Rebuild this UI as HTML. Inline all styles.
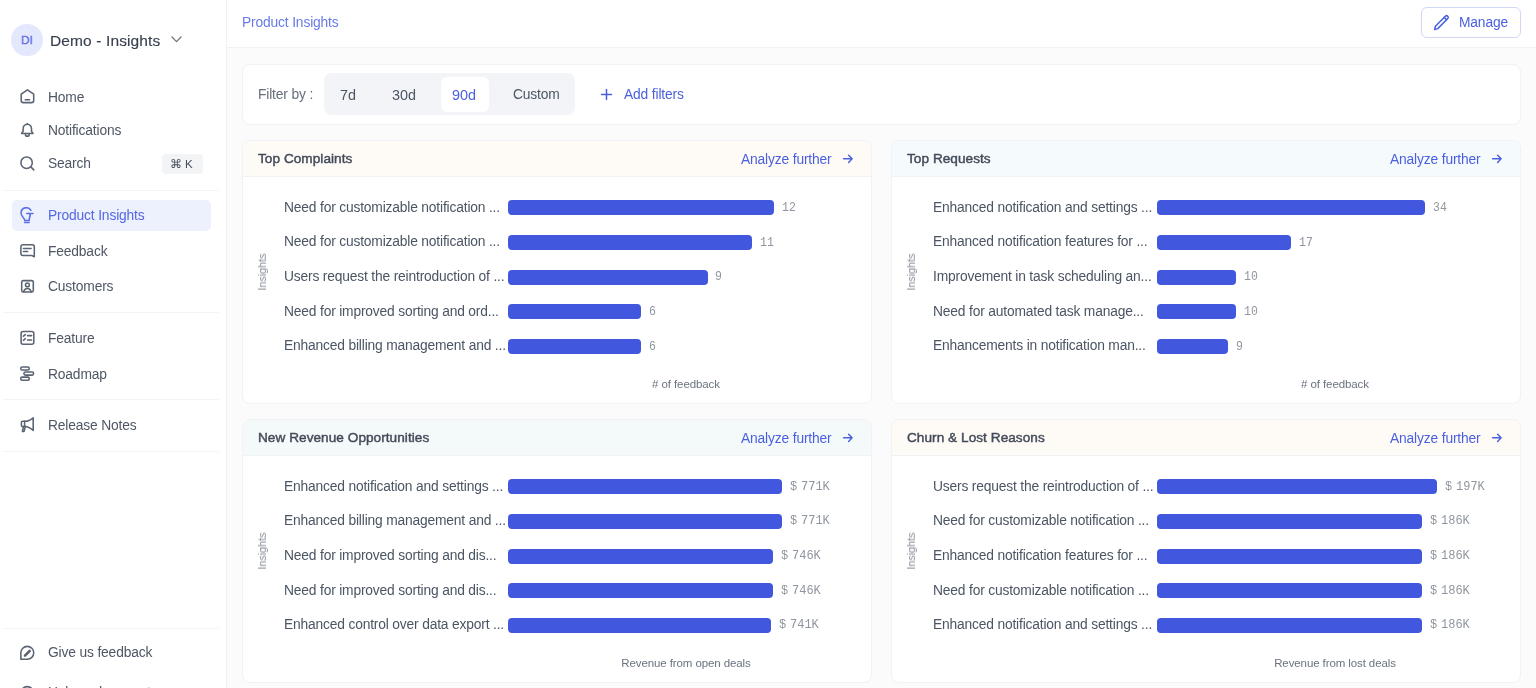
<!DOCTYPE html>
<html><head><meta charset="utf-8"><title>Product Insights</title>
<style>
html,body{margin:0;padding:0;}
body{width:1536px;height:688px;overflow:hidden;position:relative;background:#fbfbfc;font-family:"Liberation Sans",sans-serif;}
.t{position:absolute;white-space:nowrap;will-change:transform;}
.ic{position:absolute;overflow:visible;}
#sb{position:absolute;left:0;top:0;width:226px;height:688px;background:#fff;border-right:1px solid #f0f1f4;}
.avatar{position:absolute;left:11.2px;top:24px;width:31.5px;height:31.5px;border-radius:50%;background:#e4e8fc;}
.avatar span{position:absolute;left:0;right:0;top:8.8px;text-align:center;font-size:11.8px;line-height:14px;color:#5f74e6;font-weight:400;-webkit-text-stroke:0.35px #5f74e6;}
.kbd{position:absolute;left:162px;top:154px;width:41px;height:20px;border-radius:4px;background:#f3f4f6;font-size:11.5px;line-height:20px;text-align:center;color:#454d5a;box-sizing:border-box;padding-right:2.4px;will-change:transform;}
.div{position:absolute;left:3px;width:216px;height:1px;background:#f3f4f6;}
.active{position:absolute;left:12px;top:199.5px;width:198.5px;height:31.5px;border-radius:5px;background:#edf0fd;}
#hdr{position:absolute;left:227px;top:0;width:1309px;height:47px;background:#fff;border-bottom:1px solid #f1f2f4;}
.manage{position:absolute;left:1421px;top:7px;width:98px;height:29px;border:1px solid #d2d7f7;border-radius:6px;background:#fff;}
.card{position:absolute;background:#fff;border:1px solid #f1f2f5;border-radius:8px;box-sizing:border-box;}
.chd{position:absolute;left:0;top:0;right:0;height:36px;box-sizing:border-box;border-bottom:1px solid #f1f2f4;}
.seg{position:absolute;left:324px;top:73px;width:251px;height:42px;border-radius:8px;background:#f3f4f7;}
.pill{position:absolute;left:440.5px;top:77px;width:48.5px;height:35px;border-radius:6px;background:#fff;}
.bar{position:absolute;height:15.2px;background:#4057de;border-radius:4px;}
.ylab{position:absolute;font-size:10.8px;line-height:12px;color:#858b95;transform:translate(-50%,-50%) rotate(-90deg);white-space:nowrap;will-change:transform;}
</style></head><body>
<div id="sb">
<div class="avatar"><span>DI</span></div>
<div class="t " style="left:50.40px;top:30.83px;font-size:15.5px;line-height:20px;color:#363f4e;font-weight:400;-webkit-text-stroke:0.15px #363f4e;letter-spacing:0.12px;">Demo - Insights</div>
<svg class="ic" style="left:171px;top:36px;width:11px;height:7px" viewBox="0 0 11 7" fill="none" stroke="#6b7280" stroke-width="1.3" stroke-linecap="round" stroke-linejoin="round"><path d="M1 1l4.5 4.6L10 1"/></svg>
<svg class="ic" style="left:16px;top:86px;width:24px;height:24px" viewBox="0 0 24 24" fill="none" stroke="#5b6472" stroke-width="1.55" stroke-linecap="round" stroke-linejoin="round"><path d="M5.2 8.2 11.45 3.9 17.7 8.2V14.4a2.2 2.2 0 0 1-2.2 2.2H7.4a2.2 2.2 0 0 1-2.2-2.2z"/><path d="M9.2 13.8h4.4" stroke-width="1.4"/></svg>
<div class="t " style="left:48.40px;top:88.52px;font-size:13.8px;line-height:18px;color:#4f5765;font-weight:400;letter-spacing:-0.15px;">Home</div>
<svg class="ic" style="left:16px;top:120px;width:24px;height:24px" viewBox="0 0 24 24" fill="none" stroke="#5b6472" stroke-width="1.55" stroke-linecap="round" stroke-linejoin="round"><path d="M5.6 13.4H17L15.5 11.2V8.6A4.2 4.2 0 0 0 11.3 4.2 4.2 4.2 0 0 0 7.1 8.6V11.2z"/><path d="M9.5 13.6v1.6a.9.9 0 0 0 .9.9h1.8a.9.9 0 0 0 .9-.9v-1.6"/><path d="M11.3 3.4v.8"/></svg>
<div class="t " style="left:48.40px;top:121.72px;font-size:13.8px;line-height:18px;color:#4f5765;font-weight:400;letter-spacing:-0.15px;">Notifications</div>
<svg class="ic" style="left:16px;top:152px;width:24px;height:24px" viewBox="0 0 24 24" fill="none" stroke="#5b6472" stroke-width="1.55" stroke-linecap="round" stroke-linejoin="round"><circle cx="10.6" cy="10.7" r="5.7"/><path d="m14.8 14.9 3 3"/></svg>
<div class="t " style="left:48.40px;top:155.32px;font-size:13.8px;line-height:18px;color:#4f5765;font-weight:400;letter-spacing:-0.15px;">Search</div>
<div class="kbd">&#8984; K</div>
<div class="div" style="top:189.5px"></div>
<div class="active"></div>
<svg class="ic" style="left:16px;top:204px;width:24px;height:24px" viewBox="0 0 24 24" fill="none" stroke="#5b6fe6" stroke-width="1.55" stroke-linecap="round" stroke-linejoin="round"><path d="M8.8 16.4c0-2.2-3.8-3.6-3.8-7.6a5.3 5.3 0 0 1 9.9-2.4"/><path d="M13.2 16.4c0-1.6.2-2.8.9-4.2"/><path d="M8.8 16.4h4.4"/><path d="M8.6 18.6h4.6" stroke-width="1.5"/><path d="M10.8 9.5h6.2"/><path d="M14.1 10.2v1.6"/></svg>
<div class="t " style="left:48.40px;top:206.72px;font-size:13.8px;line-height:18px;color:#5468e3;font-weight:400;letter-spacing:-0.15px;">Product Insights</div>
<svg class="ic" style="left:16px;top:239px;width:24px;height:24px" viewBox="0 0 24 24" fill="none" stroke="#5b6472" stroke-width="1.55" stroke-linecap="round" stroke-linejoin="round"><path d="M6.9 5.7h9.4a2 2 0 0 1 2 2v10.1l-2.7-1.4H6.9a2 2 0 0 1-2-2V7.7a2 2 0 0 1 2-2z"/><path d="M7.5 9.4h7.6M7.5 12.4h4.2"/></svg>
<div class="t " style="left:48.40px;top:242.72px;font-size:13.8px;line-height:18px;color:#4f5765;font-weight:400;letter-spacing:-0.15px;">Feedback</div>
<svg class="ic" style="left:16px;top:274px;width:24px;height:24px" viewBox="0 0 24 24" fill="none" stroke="#5b6472" stroke-width="1.55" stroke-linecap="round" stroke-linejoin="round"><rect x="5.7" y="6.6" width="11.6" height="11.4" rx="1.6"/><circle cx="11.4" cy="10.9" r="1.9"/><path d="M7.6 18c.5-2.2 2-3.6 3.8-3.6s3.3 1.4 3.8 3.6"/></svg>
<div class="t " style="left:48.40px;top:278.42px;font-size:13.8px;line-height:18px;color:#4f5765;font-weight:400;letter-spacing:-0.15px;">Customers</div>
<div class="div" style="top:311.5px"></div>
<svg class="ic" style="left:16px;top:326px;width:24px;height:24px" viewBox="0 0 24 24" fill="none" stroke="#5b6472" stroke-width="1.55" stroke-linecap="round" stroke-linejoin="round"><rect x="5.1" y="5.4" width="12.7" height="12.9" rx="2"/><path d="m7.4 10.2 1.9-1.6M7.4 14.3l1.9-1.6M11.5 9.6h4.1M11.5 13.9h4.1"/></svg>
<div class="t " style="left:48.40px;top:330.22px;font-size:13.8px;line-height:18px;color:#4f5765;font-weight:400;letter-spacing:-0.15px;">Feature</div>
<svg class="ic" style="left:16px;top:361px;width:24px;height:24px" viewBox="0 0 24 24" fill="none" stroke="#5b6472" stroke-width="1.55" stroke-linecap="round" stroke-linejoin="round"><rect x="4.7" y="5.9" width="8.6" height="3.1" rx="1.55"/><rect x="7.9" y="11" width="9.7" height="3.1" rx="1.55"/><rect x="4.7" y="16.1" width="8.6" height="3.1" rx="1.55"/></svg>
<div class="t " style="left:48.40px;top:365.72px;font-size:13.8px;line-height:18px;color:#4f5765;font-weight:400;letter-spacing:-0.15px;">Roadmap</div>
<div class="div" style="top:399px"></div>
<svg class="ic" style="left:16px;top:413px;width:24px;height:24px" viewBox="0 0 24 24" fill="none" stroke="#5b6472" stroke-width="1.55" stroke-linecap="round" stroke-linejoin="round"><path d="M6.6 8.3h2.8c2.3 0 5.2-1.4 7.8-3.5v12.6c-2.6-2.1-5.5-3.9-7.8-3.9H6.6a1.2 1.2 0 0 1-1.2-1.2V9.5a1.2 1.2 0 0 1 1.2-1.2z"/><path d="M8.6 8.3v5.2"/><path d="m9.3 13.6-1.2 4.8H6.4l1.1-4.8"/></svg>
<div class="t " style="left:48.40px;top:416.92px;font-size:13.8px;line-height:18px;color:#4f5765;font-weight:400;letter-spacing:-0.15px;">Release Notes</div>
<div class="div" style="top:450.5px"></div>
<div class="div" style="top:628px"></div>
<svg class="ic" style="left:16px;top:640.8px;width:24px;height:24px" viewBox="0 0 24 24" fill="none" stroke="#5b6472" stroke-width="1.55" stroke-linecap="round" stroke-linejoin="round"><path d="M4.85 18.2V11.8a6.45 6.45 0 1 1 6.45 6.45z"/><path d="M9 14.6 13.6 10" stroke-width="2.6"/></svg>
<div class="t " style="left:48.40px;top:643.82px;font-size:13.8px;line-height:18px;color:#4f5765;font-weight:400;letter-spacing:-0.15px;">Give us feedback</div>
<svg class="ic" style="left:16px;top:680.5px;width:24px;height:24px" viewBox="0 0 24 24" fill="none" stroke="#5b6472" stroke-width="1.55" stroke-linecap="round" stroke-linejoin="round"><circle cx="11.3" cy="11.8" r="6.2"/></svg>
<div class="t " style="left:48.40px;top:684.42px;font-size:13.8px;line-height:18px;color:#4f5765;font-weight:400;letter-spacing:-0.15px;">Help and support</div>
</div>
<div id="hdr"></div>
<div class="t " style="left:241.80px;top:13.62px;font-size:13.8px;line-height:18px;color:#687be7;font-weight:400;letter-spacing:-0.15px;">Product Insights</div>
<div class="manage"></div>
<svg class="ic" style="left:1428px;top:10px;width:24px;height:24px" viewBox="0 0 24 24" fill="none" stroke="#4a5fe0" stroke-width="1.5" stroke-linecap="round" stroke-linejoin="round"><path d="M6.6 19.5 7.4 16.2 17.4 6.2a1.65 1.65 0 0 1 2.35 2.35L9.8 18.6z"/><path d="m16.2 7.4 2.3 2.3"/></svg>
<div class="t " style="left:1459.30px;top:14.32px;font-size:13.8px;line-height:18px;color:#4a5fe0;font-weight:400;letter-spacing:-0.15px;">Manage</div>
<div class="card" style="left:242px;top:64px;width:1279px;height:61px"></div>
<div class="t " style="left:257.80px;top:85.82px;font-size:13.8px;line-height:18px;color:#666d7a;font-weight:400;letter-spacing:-0.15px;">Filter by :</div>
<div class="seg"></div><div class="pill"></div>
<div class="t " style="left:340.00px;top:85.61px;font-size:14.4px;line-height:18px;color:#4b5563;font-weight:400;">7d</div>
<div class="t " style="left:391.80px;top:85.61px;font-size:14.4px;line-height:18px;color:#4b5563;font-weight:400;">30d</div>
<div class="t " style="left:452.20px;top:85.61px;font-size:14.4px;line-height:18px;color:#4a5fe0;font-weight:400;">90d</div>
<div class="t " style="left:512.80px;top:85.82px;font-size:13.8px;line-height:18px;color:#4b5563;font-weight:400;letter-spacing:-0.15px;">Custom</div>
<svg class="ic" style="left:594px;top:82px;width:24px;height:24px" viewBox="0 0 24 24" fill="none" stroke="#4a5fe0" stroke-width="1.5" stroke-linecap="round"><path d="M12.5 7.4v10M7.5 12.4h10"/></svg>
<div class="t " style="left:624.00px;top:85.82px;font-size:13.8px;line-height:18px;color:#4a5fe0;font-weight:400;letter-spacing:-0.15px;">Add filters</div>
<div class="card" style="left:242.0px;top:140px;width:630px;height:264px;overflow:hidden"><div class="chd" style="background:#fefbf6"></div></div>
<div class="t " style="left:257.50px;top:149.89px;font-size:13.6px;line-height:18px;color:#434b59;font-weight:400;-webkit-text-stroke:0.45px #434b59;letter-spacing:0.05px;">Top Complaints</div>
<div class="t " style="left:740.80px;top:150.62px;font-size:13.8px;line-height:18px;color:#4a5fe0;font-weight:400;letter-spacing:-0.15px;">Analyze further</div>
<svg class="ic" style="left:836.0px;top:148px;width:24px;height:24px" viewBox="0 0 24 24" fill="none" stroke="#4a5fe0" stroke-width="1.45" stroke-linecap="round" stroke-linejoin="round"><path d="M7.6 10.8H16M12.6 7.3l3.5 3.5-3.5 3.6"/></svg>
<div class="ylab" style="left:261.7px;top:272px">Insights</div>
<div class="t " style="left:284.40px;top:198.62px;font-size:13.8px;line-height:18px;color:#4b5563;font-weight:400;letter-spacing:-0.15px;letter-spacing:-0.17px;">Need for customizable notification ...</div>
<div class="bar" style="left:508.3px;top:200.30px;width:265.7px"></div>
<div class="t " style="left:781.60px;top:198.92px;font-size:11.5px;line-height:18px;color:#90969f;font-weight:400;font-family:'Liberation Mono',monospace;transform:scaleY(1.16);transform-origin:0 13.0px;">12</div>
<div class="t " style="left:284.40px;top:233.27px;font-size:13.8px;line-height:18px;color:#4b5563;font-weight:400;letter-spacing:-0.15px;letter-spacing:-0.17px;">Need for customizable notification ...</div>
<div class="bar" style="left:508.3px;top:234.95px;width:243.6px"></div>
<div class="t " style="left:759.50px;top:233.57px;font-size:11.5px;line-height:18px;color:#90969f;font-weight:400;font-family:'Liberation Mono',monospace;transform:scaleY(1.16);transform-origin:0 13.0px;">11</div>
<div class="t " style="left:284.40px;top:267.92px;font-size:13.8px;line-height:18px;color:#4b5563;font-weight:400;letter-spacing:-0.15px;letter-spacing:-0.17px;">Users request the reintroduction of ...</div>
<div class="bar" style="left:508.3px;top:269.60px;width:199.3px"></div>
<div class="t " style="left:715.20px;top:268.22px;font-size:11.5px;line-height:18px;color:#90969f;font-weight:400;font-family:'Liberation Mono',monospace;transform:scaleY(1.16);transform-origin:0 13.0px;">9</div>
<div class="t " style="left:284.40px;top:302.57px;font-size:13.8px;line-height:18px;color:#4b5563;font-weight:400;letter-spacing:-0.15px;letter-spacing:-0.17px;">Need for improved sorting and ord...</div>
<div class="bar" style="left:508.3px;top:304.25px;width:132.9px"></div>
<div class="t " style="left:648.80px;top:302.87px;font-size:11.5px;line-height:18px;color:#90969f;font-weight:400;font-family:'Liberation Mono',monospace;transform:scaleY(1.16);transform-origin:0 13.0px;">6</div>
<div class="t " style="left:284.40px;top:337.22px;font-size:13.8px;line-height:18px;color:#4b5563;font-weight:400;letter-spacing:-0.15px;letter-spacing:-0.17px;">Enhanced billing management and ...</div>
<div class="bar" style="left:508.3px;top:338.90px;width:132.9px"></div>
<div class="t " style="left:648.80px;top:337.52px;font-size:11.5px;line-height:18px;color:#90969f;font-weight:400;font-family:'Liberation Mono',monospace;transform:scaleY(1.16);transform-origin:0 13.0px;">6</div>
<div class="t " style="left:686.00px;top:374.92px;font-size:11.5px;line-height:18px;color:#6b7280;font-weight:400;transform:translateX(-50%);letter-spacing:-0.1px;"># of feedback</div>
<div class="card" style="left:891.0px;top:140px;width:630px;height:264px;overflow:hidden"><div class="chd" style="background:#f5fafc"></div></div>
<div class="t " style="left:906.50px;top:149.89px;font-size:13.6px;line-height:18px;color:#434b59;font-weight:400;-webkit-text-stroke:0.45px #434b59;letter-spacing:0.05px;">Top Requests</div>
<div class="t " style="left:1389.80px;top:150.62px;font-size:13.8px;line-height:18px;color:#4a5fe0;font-weight:400;letter-spacing:-0.15px;">Analyze further</div>
<svg class="ic" style="left:1485.0px;top:148px;width:24px;height:24px" viewBox="0 0 24 24" fill="none" stroke="#4a5fe0" stroke-width="1.45" stroke-linecap="round" stroke-linejoin="round"><path d="M7.6 10.8H16M12.6 7.3l3.5 3.5-3.5 3.6"/></svg>
<div class="ylab" style="left:910.7px;top:272px">Insights</div>
<div class="t " style="left:933.40px;top:198.62px;font-size:13.8px;line-height:18px;color:#4b5563;font-weight:400;letter-spacing:-0.15px;letter-spacing:-0.17px;">Enhanced notification and settings ...</div>
<div class="bar" style="left:1157.3px;top:200.30px;width:268px"></div>
<div class="t " style="left:1432.90px;top:198.92px;font-size:11.5px;line-height:18px;color:#90969f;font-weight:400;font-family:'Liberation Mono',monospace;transform:scaleY(1.16);transform-origin:0 13.0px;">34</div>
<div class="t " style="left:933.40px;top:233.27px;font-size:13.8px;line-height:18px;color:#4b5563;font-weight:400;letter-spacing:-0.15px;letter-spacing:-0.17px;">Enhanced notification features for ...</div>
<div class="bar" style="left:1157.3px;top:234.95px;width:134px"></div>
<div class="t " style="left:1298.90px;top:233.57px;font-size:11.5px;line-height:18px;color:#90969f;font-weight:400;font-family:'Liberation Mono',monospace;transform:scaleY(1.16);transform-origin:0 13.0px;">17</div>
<div class="t " style="left:933.40px;top:267.92px;font-size:13.8px;line-height:18px;color:#4b5563;font-weight:400;letter-spacing:-0.15px;letter-spacing:-0.17px;">Improvement in task scheduling an...</div>
<div class="bar" style="left:1157.3px;top:269.60px;width:78.8px"></div>
<div class="t " style="left:1243.70px;top:268.22px;font-size:11.5px;line-height:18px;color:#90969f;font-weight:400;font-family:'Liberation Mono',monospace;transform:scaleY(1.16);transform-origin:0 13.0px;">10</div>
<div class="t " style="left:933.40px;top:302.57px;font-size:13.8px;line-height:18px;color:#4b5563;font-weight:400;letter-spacing:-0.15px;letter-spacing:-0.17px;">Need for automated task manage...</div>
<div class="bar" style="left:1157.3px;top:304.25px;width:78.8px"></div>
<div class="t " style="left:1243.70px;top:302.87px;font-size:11.5px;line-height:18px;color:#90969f;font-weight:400;font-family:'Liberation Mono',monospace;transform:scaleY(1.16);transform-origin:0 13.0px;">10</div>
<div class="t " style="left:933.40px;top:337.22px;font-size:13.8px;line-height:18px;color:#4b5563;font-weight:400;letter-spacing:-0.15px;letter-spacing:-0.17px;">Enhancements in notification man...</div>
<div class="bar" style="left:1157.3px;top:338.90px;width:70.9px"></div>
<div class="t " style="left:1235.80px;top:337.52px;font-size:11.5px;line-height:18px;color:#90969f;font-weight:400;font-family:'Liberation Mono',monospace;transform:scaleY(1.16);transform-origin:0 13.0px;">9</div>
<div class="t " style="left:1335.00px;top:374.92px;font-size:11.5px;line-height:18px;color:#6b7280;font-weight:400;transform:translateX(-50%);letter-spacing:-0.1px;"># of feedback</div>
<div class="card" style="left:242.0px;top:419px;width:630px;height:264px;overflow:hidden"><div class="chd" style="background:#f4fafa"></div></div>
<div class="t " style="left:257.50px;top:428.89px;font-size:13.6px;line-height:18px;color:#434b59;font-weight:400;-webkit-text-stroke:0.45px #434b59;letter-spacing:0.05px;">New Revenue Opportunities</div>
<div class="t " style="left:740.80px;top:429.62px;font-size:13.8px;line-height:18px;color:#4a5fe0;font-weight:400;letter-spacing:-0.15px;">Analyze further</div>
<svg class="ic" style="left:836.0px;top:427px;width:24px;height:24px" viewBox="0 0 24 24" fill="none" stroke="#4a5fe0" stroke-width="1.45" stroke-linecap="round" stroke-linejoin="round"><path d="M7.6 10.8H16M12.6 7.3l3.5 3.5-3.5 3.6"/></svg>
<div class="ylab" style="left:261.7px;top:551px">Insights</div>
<div class="t " style="left:284.40px;top:477.62px;font-size:13.8px;line-height:18px;color:#4b5563;font-weight:400;letter-spacing:-0.15px;letter-spacing:-0.17px;">Enhanced notification and settings ...</div>
<div class="bar" style="left:508.3px;top:479.30px;width:273.7px"></div>
<div class="t " style="left:789.80px;top:477.74px;font-size:12px;line-height:18px;color:#90969f;font-weight:400;font-family:'Liberation Mono',monospace;word-spacing:-3.4px;transform:scaleY(1.14);transform-origin:0 13.2px;">$ 771K</div>
<div class="t " style="left:284.40px;top:512.27px;font-size:13.8px;line-height:18px;color:#4b5563;font-weight:400;letter-spacing:-0.15px;letter-spacing:-0.17px;">Enhanced billing management and ...</div>
<div class="bar" style="left:508.3px;top:513.95px;width:273.7px"></div>
<div class="t " style="left:789.80px;top:512.39px;font-size:12px;line-height:18px;color:#90969f;font-weight:400;font-family:'Liberation Mono',monospace;word-spacing:-3.4px;transform:scaleY(1.14);transform-origin:0 13.2px;">$ 771K</div>
<div class="t " style="left:284.40px;top:546.92px;font-size:13.8px;line-height:18px;color:#4b5563;font-weight:400;letter-spacing:-0.15px;letter-spacing:-0.17px;">Need for improved sorting and dis...</div>
<div class="bar" style="left:508.3px;top:548.60px;width:264.8px"></div>
<div class="t " style="left:780.90px;top:547.04px;font-size:12px;line-height:18px;color:#90969f;font-weight:400;font-family:'Liberation Mono',monospace;word-spacing:-3.4px;transform:scaleY(1.14);transform-origin:0 13.2px;">$ 746K</div>
<div class="t " style="left:284.40px;top:581.57px;font-size:13.8px;line-height:18px;color:#4b5563;font-weight:400;letter-spacing:-0.15px;letter-spacing:-0.17px;">Need for improved sorting and dis...</div>
<div class="bar" style="left:508.3px;top:583.25px;width:264.8px"></div>
<div class="t " style="left:780.90px;top:581.69px;font-size:12px;line-height:18px;color:#90969f;font-weight:400;font-family:'Liberation Mono',monospace;word-spacing:-3.4px;transform:scaleY(1.14);transform-origin:0 13.2px;">$ 746K</div>
<div class="t " style="left:284.40px;top:616.22px;font-size:13.8px;line-height:18px;color:#4b5563;font-weight:400;letter-spacing:-0.15px;letter-spacing:-0.17px;">Enhanced control over data export ...</div>
<div class="bar" style="left:508.3px;top:617.90px;width:263px"></div>
<div class="t " style="left:779.10px;top:616.34px;font-size:12px;line-height:18px;color:#90969f;font-weight:400;font-family:'Liberation Mono',monospace;word-spacing:-3.4px;transform:scaleY(1.14);transform-origin:0 13.2px;">$ 741K</div>
<div class="t " style="left:686.00px;top:653.92px;font-size:11.5px;line-height:18px;color:#6b7280;font-weight:400;transform:translateX(-50%);letter-spacing:-0.1px;">Revenue from open deals</div>
<div class="card" style="left:891.0px;top:419px;width:630px;height:264px;overflow:hidden"><div class="chd" style="background:#fefbf6"></div></div>
<div class="t " style="left:906.50px;top:428.89px;font-size:13.6px;line-height:18px;color:#434b59;font-weight:400;-webkit-text-stroke:0.45px #434b59;letter-spacing:0.05px;">Churn &amp; Lost Reasons</div>
<div class="t " style="left:1389.80px;top:429.62px;font-size:13.8px;line-height:18px;color:#4a5fe0;font-weight:400;letter-spacing:-0.15px;">Analyze further</div>
<svg class="ic" style="left:1485.0px;top:427px;width:24px;height:24px" viewBox="0 0 24 24" fill="none" stroke="#4a5fe0" stroke-width="1.45" stroke-linecap="round" stroke-linejoin="round"><path d="M7.6 10.8H16M12.6 7.3l3.5 3.5-3.5 3.6"/></svg>
<div class="ylab" style="left:910.7px;top:551px">Insights</div>
<div class="t " style="left:933.40px;top:477.62px;font-size:13.8px;line-height:18px;color:#4b5563;font-weight:400;letter-spacing:-0.15px;letter-spacing:-0.17px;">Users request the reintroduction of ...</div>
<div class="bar" style="left:1157.3px;top:479.30px;width:280px"></div>
<div class="t " style="left:1445.10px;top:477.74px;font-size:12px;line-height:18px;color:#90969f;font-weight:400;font-family:'Liberation Mono',monospace;word-spacing:-3.4px;transform:scaleY(1.14);transform-origin:0 13.2px;">$ 197K</div>
<div class="t " style="left:933.40px;top:512.27px;font-size:13.8px;line-height:18px;color:#4b5563;font-weight:400;letter-spacing:-0.15px;letter-spacing:-0.17px;">Need for customizable notification ...</div>
<div class="bar" style="left:1157.3px;top:513.95px;width:264.4px"></div>
<div class="t " style="left:1429.50px;top:512.39px;font-size:12px;line-height:18px;color:#90969f;font-weight:400;font-family:'Liberation Mono',monospace;word-spacing:-3.4px;transform:scaleY(1.14);transform-origin:0 13.2px;">$ 186K</div>
<div class="t " style="left:933.40px;top:546.92px;font-size:13.8px;line-height:18px;color:#4b5563;font-weight:400;letter-spacing:-0.15px;letter-spacing:-0.17px;">Enhanced notification features for ...</div>
<div class="bar" style="left:1157.3px;top:548.60px;width:264.4px"></div>
<div class="t " style="left:1429.50px;top:547.04px;font-size:12px;line-height:18px;color:#90969f;font-weight:400;font-family:'Liberation Mono',monospace;word-spacing:-3.4px;transform:scaleY(1.14);transform-origin:0 13.2px;">$ 186K</div>
<div class="t " style="left:933.40px;top:581.57px;font-size:13.8px;line-height:18px;color:#4b5563;font-weight:400;letter-spacing:-0.15px;letter-spacing:-0.17px;">Need for customizable notification ...</div>
<div class="bar" style="left:1157.3px;top:583.25px;width:264.4px"></div>
<div class="t " style="left:1429.50px;top:581.69px;font-size:12px;line-height:18px;color:#90969f;font-weight:400;font-family:'Liberation Mono',monospace;word-spacing:-3.4px;transform:scaleY(1.14);transform-origin:0 13.2px;">$ 186K</div>
<div class="t " style="left:933.40px;top:616.22px;font-size:13.8px;line-height:18px;color:#4b5563;font-weight:400;letter-spacing:-0.15px;letter-spacing:-0.17px;">Enhanced notification and settings ...</div>
<div class="bar" style="left:1157.3px;top:617.90px;width:264.4px"></div>
<div class="t " style="left:1429.50px;top:616.34px;font-size:12px;line-height:18px;color:#90969f;font-weight:400;font-family:'Liberation Mono',monospace;word-spacing:-3.4px;transform:scaleY(1.14);transform-origin:0 13.2px;">$ 186K</div>
<div class="t " style="left:1335.00px;top:653.92px;font-size:11.5px;line-height:18px;color:#6b7280;font-weight:400;transform:translateX(-50%);letter-spacing:-0.1px;">Revenue from lost deals</div>
</body></html>
